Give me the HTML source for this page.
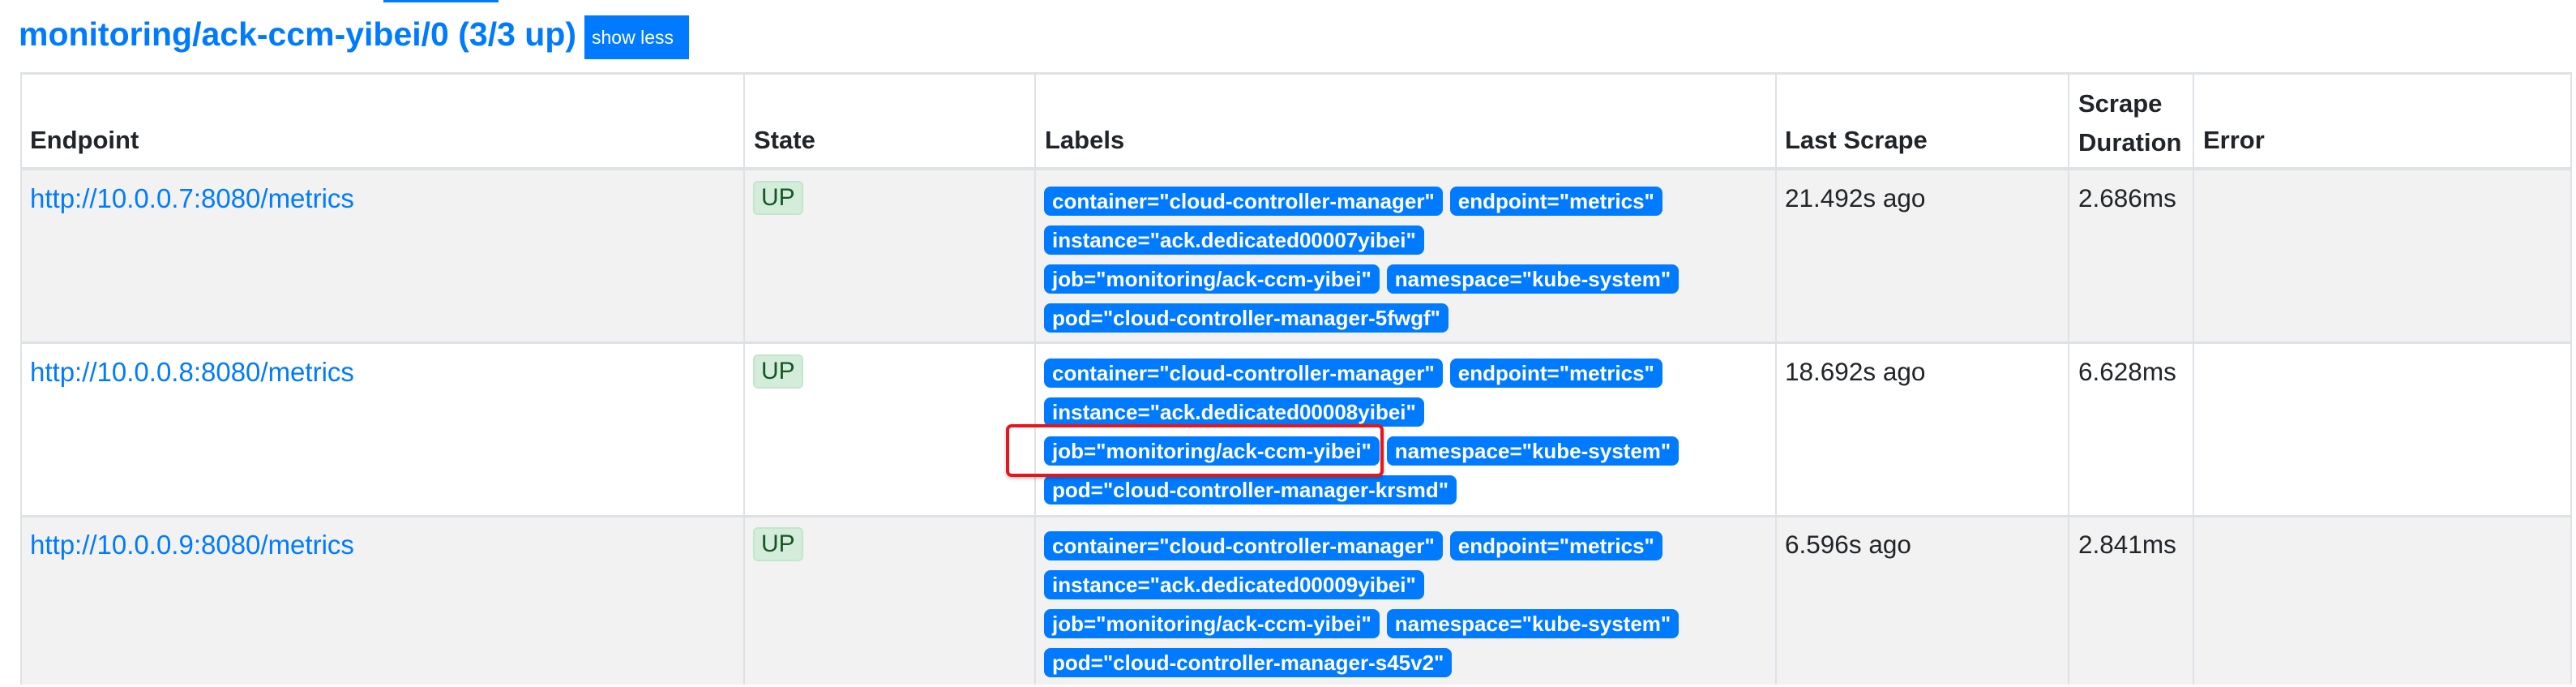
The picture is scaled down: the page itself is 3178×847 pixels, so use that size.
<!DOCTYPE html>
<html><head><meta charset="utf-8"><style>
*{margin:0;padding:0;box-sizing:border-box}
body{width:3178px;height:844px;overflow:hidden;background:#fff;font-family:"Liberation Sans",Arial,sans-serif;color:#212529;position:relative}
.a{position:absolute;white-space:nowrap}
.h{font-size:41px;font-weight:bold;color:#007bff;line-height:41px}
.btn{background:#007bff;color:#fff;font-size:23px;line-height:54px;padding:0 9px}
.th{font-size:31px;font-weight:bold;line-height:31px}
.td{font-size:31.5px;line-height:31px}
.lnk{color:#007bff;font-size:33px}
.vl{position:absolute;width:2px;background:#dee2e6}
.hl{position:absolute;left:25px;width:3147px;background:#dee2e6}
.row{position:absolute;left:25px;width:3147px}
.up{position:absolute;background:#d4edda;border:2px solid #c3e6cb;color:#155724;font-size:30px;line-height:38px;border-radius:6px;padding:0 8px;height:42px}
.labels{position:absolute;left:1288px}
.ln{height:48px;display:flex;gap:9px}
.lb{background:#007bff;color:#fff;font-weight:bold;font-size:26px;line-height:36px;height:36px;padding:0 10px;border-radius:8px;white-space:nowrap}
</style></head><body>
<div class="a" style="left:473px;top:0;width:142px;height:3px;background:#007bff"></div>
<div class="a h" style="left:23px;top:22px">monitoring/ack-ccm-yibei/0 (3/3 up)</div>
<div class="a btn" style="left:721px;top:19px;width:129px;height:54px">show less</div>

<div class="row" style="top:210px;height:212px;background:#f2f2f2"></div>
<div class="row" style="top:638px;height:206px;background:#f2f2f2"></div>

<div class="hl" style="top:89px;height:3px"></div>
<div class="hl" style="top:206px;height:4px"></div>
<div class="hl" style="top:421px;height:3px"></div>
<div class="hl" style="top:635px;height:3px"></div>

<div class="vl" style="left:25px;top:89px;height:755px"></div>
<div class="vl" style="left:917px;top:89px;height:755px"></div>
<div class="vl" style="left:1276px;top:89px;height:755px"></div>
<div class="vl" style="left:2190px;top:89px;height:755px"></div>
<div class="vl" style="left:2551px;top:89px;height:755px"></div>
<div class="vl" style="left:2705px;top:89px;height:755px"></div>
<div class="vl" style="left:3171px;top:89px;height:755px"></div>

<div class="a th" style="left:37px;top:157px">Endpoint</div>
<div class="a th" style="left:930px;top:157px">State</div>
<div class="a th" style="left:1289px;top:157px">Labels</div>
<div class="a th" style="left:2202px;top:157px">Last Scrape</div>
<div class="a th" style="left:2564px;top:104px;line-height:48px">Scrape<br>Duration</div>
<div class="a th" style="left:2718px;top:157px">Error</div>

<!-- row 1 -->
<div class="a td lnk" style="left:37px;top:229px">http://10.0.0.7:8080/metrics</div>
<div class="up" style="left:929px;top:223px">UP</div>
<div class="labels" style="top:230px">
<div class="ln"><span class="lb">container="cloud-controller-manager"</span><span class="lb">endpoint="metrics"</span></div>
<div class="ln"><span class="lb">instance="ack.dedicated00007yibei"</span></div>
<div class="ln"><span class="lb">job="monitoring/ack-ccm-yibei"</span><span class="lb">namespace="kube-system"</span></div>
<div class="ln"><span class="lb">pod="cloud-controller-manager-5fwgf"</span></div>
</div>
<div class="a td" style="left:2202px;top:229px">21.492s ago</div>
<div class="a td" style="left:2564px;top:229px">2.686ms</div>

<!-- row 2 -->
<div class="a td lnk" style="left:37px;top:443px">http://10.0.0.8:8080/metrics</div>
<div class="up" style="left:929px;top:437px">UP</div>
<div class="labels" style="top:442px">
<div class="ln"><span class="lb">container="cloud-controller-manager"</span><span class="lb">endpoint="metrics"</span></div>
<div class="ln"><span class="lb">instance="ack.dedicated00008yibei"</span></div>
<div class="ln"><span class="lb">job="monitoring/ack-ccm-yibei"</span><span class="lb">namespace="kube-system"</span></div>
<div class="ln"><span class="lb">pod="cloud-controller-manager-krsmd"</span></div>
</div>
<div class="a td" style="left:2202px;top:443px">18.692s ago</div>
<div class="a td" style="left:2564px;top:443px">6.628ms</div>
<div class="a" style="left:1241px;top:523px;width:466px;height:65px;border:4px solid #e8141b;border-radius:7px;box-shadow:0 2px 4px rgba(0,0,0,.25)"></div>

<!-- row 3 -->
<div class="a td lnk" style="left:37px;top:656px">http://10.0.0.9:8080/metrics</div>
<div class="up" style="left:929px;top:650px">UP</div>
<div class="labels" style="top:655px">
<div class="ln"><span class="lb">container="cloud-controller-manager"</span><span class="lb">endpoint="metrics"</span></div>
<div class="ln"><span class="lb">instance="ack.dedicated00009yibei"</span></div>
<div class="ln"><span class="lb">job="monitoring/ack-ccm-yibei"</span><span class="lb">namespace="kube-system"</span></div>
<div class="ln"><span class="lb">pod="cloud-controller-manager-s45v2"</span></div>
</div>
<div class="a td" style="left:2202px;top:656px">6.596s ago</div>
<div class="a td" style="left:2564px;top:656px">2.841ms</div>
</body></html>
